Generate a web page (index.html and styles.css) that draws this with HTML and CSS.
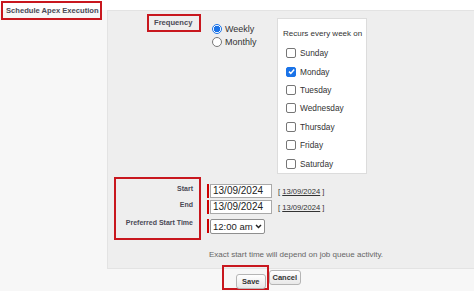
FILE: index.html
```html
<!DOCTYPE html>
<html lang="en">
<head>
<meta charset="UTF-8">
<title>Schedule Apex Execution</title>
<link rel="stylesheet" href="styles.css">
</head>
<body>
<div class="page">
    <div class="sidebar">
        <div class="title-box">Schedule Apex Execution</div>
    </div>
    <div class="main">
        <div class="panel">
            <div class="freq-row">
                <div class="label-col">
                    <div class="freq-box">Frequency</div>
                </div>
                <div class="radios">
                    <label class="radio-line"><span class="radio on"></span>Weekly</label>
                    <label class="radio-line"><span class="radio"></span>Monthly</label>
                </div>
                <div class="days">
                    <div class="days-title">Recurs every week on</div>
                    <div class="day"><span class="chk"></span>Sunday</div>
                    <div class="day"><span class="chk on"><svg width="9" height="9" viewBox="0 0 9 9"><path d="M2 4.6 L3.8 6.4 L7.2 2.6" fill="none" stroke="#fff" stroke-width="1.5"/></svg></span>Monday</div>
                    <div class="day"><span class="chk"></span>Tuesday</div>
                    <div class="day"><span class="chk"></span>Wednesday</div>
                    <div class="day"><span class="chk"></span>Thursday</div>
                    <div class="day"><span class="chk"></span>Friday</div>
                    <div class="day"><span class="chk"></span>Saturday</div>
                </div>
            </div>

            <div class="time-row">
                <div class="time-labels">
                    <div class="tl">Start</div>
                    <div class="tl">End</div>
                    <div class="tl">Preferred Start Time</div>
                </div>
                <div class="time-fields">
                    <div class="field">
                        <span class="req"></span><span class="input">13/09/2024</span>
                        <span class="today">[ <u>13/09/2024</u> ]</span>
                    </div>
                    <div class="field">
                        <span class="req"></span><span class="input">13/09/2024</span>
                        <span class="today">[ <u>13/09/2024</u> ]</span>
                    </div>
                    <div class="field">
                        <span class="req"></span><span class="select">12:00 am <svg width="7" height="5" viewBox="0 0 8 6"><path d="M1 1.2 L4 4.2 L7 1.2" fill="none" stroke="#222" stroke-width="1.8"/></svg></span>
                    </div>
                </div>
            </div>

            <div class="note">Exact start time will depend on job queue activity.</div>
        </div>
        <div class="buttons">
            <div class="save-box"><button class="btn">Save</button></div>
            <button class="btn cancel">Cancel</button>
        </div>
    </div>
</div>
</body>
</html>
```

FILE: styles.css
```css
body {
    margin: 0;
    background: #f8f8f8;
    font-family: "Liberation Sans", Arial, sans-serif;
    color: #222;
}

.page {
    display: flex;
    height: 291px;
    background: linear-gradient(#ffffff 0, #ffffff 10px, #f7f7f7 10px);
}

/* left title */
.sidebar {
    width: 107px;
    flex: none;
}
.title-box {
    margin: 1px 0 0 1px;
    width: 94px;
    height: 15px;
    border: 2px solid #c8171e;
    font-size: 7.6px;
    font-weight: bold;
    color: #4a4a56;
    padding-left: 3px;
    line-height: 15px;
    white-space: nowrap;
}

/* main panel */
.main {
    flex: 1;
}
.panel {
    margin-top: 10px;
    height: 257px;
    background: #eeeeee;
    border: 1px solid #e3e3e3;
    border-right: none;
}

.freq-row {
    display: flex;
    padding-top: 3px;
}
.label-col {
    width: 93px;
    display: flex;
    justify-content: flex-end;
}
.freq-box {
    width: 45px;
    height: 14px;
    border: 2px solid #c8171e;
    font-size: 7.6px;
    font-weight: bold;
    color: #4a4a56;
    line-height: 13px;
    padding-left: 5px;
}

.radios {
    width: 76px;
    padding: 8px 0 0 11px;
    box-sizing: border-box;
}
.radio-line {
    display: flex;
    align-items: center;
    font-size: 9px;
    color: #333;
    height: 13px;
}
.radio {
    width: 8px;
    height: 8px;
    border: 1px solid #777;
    border-radius: 50%;
    background: #fff;
    margin-right: 3px;
    box-sizing: content-box;
}
.radio.on {
    border-color: #1a73e8;
    background: radial-gradient(circle, #1a73e8 0, #1a73e8 3px, #fff 3.5px);
}

.days {
    margin-top: 4px;
    width: 90px;
    height: 156px;
    background: #fff;
    border: 1px solid #dcdcdc;
    padding: 10px 0 0 5px;
    box-sizing: border-box;
}
.days-title {
    font-size: 8px;
    color: #333;
    white-space: nowrap;
    margin-bottom: 6px;
}
.day {
    display: flex;
    align-items: center;
    font-size: 8.3px;
    color: #333;
    height: 18.4px;
    padding-left: 3px;
}
.chk {
    width: 8px;
    height: 8px;
    border: 1px solid #767676;
    border-radius: 2px;
    background: #fff;
    margin-right: 4px;
    display: inline-flex;
}
.chk.on {
    background: #1a73e8;
    border-color: #1a73e8;
}
.chk svg {
    margin: -0.5px;
}

/* start / end / time */
.time-row {
    display: flex;
    margin-top: 3px;
}
.time-labels {
    margin-left: 6px;
    width: 83px;
    height: 53px;
    border: 2px solid #c8171e;
    padding-top: 6px;
}
.tl {
    font-size: 7px;
    font-weight: bold;
    color: #4a4a56;
    text-align: right;
    padding-right: 6px;
    height: 16px;
}
.tl:last-child {
    padding-top: 2px;
}

.time-fields {
    padding: 6px 0 0 6px;
}
.field {
    display: flex;
    align-items: center;
    height: 16px;
}
.field:last-child {
    margin-top: 3px;
}
.req {
    width: 2px;
    height: 14px;
    background: #c00;
    margin-right: 1px;
}
.input {
    width: 58px;
    height: 12px;
    border: 1px solid #a9a9a9;
    background: #fff;
    font-size: 10px;
    line-height: 12px;
    padding-left: 2px;
    color: #222;
}
.today {
    margin-left: 6px;
    font-size: 7.6px;
    color: #333;
}
.select {
    display: flex;
    align-items: center;
    gap: 2px;
    height: 13px;
    padding: 0 2px 0 2px;
    border: 1px solid #8f8f8f;
    border-radius: 2px;
    background: #fff;
    font-size: 9.5px;
    white-space: nowrap;
    color: #222;
}

.note {
    margin-top: 10px;
    text-align: center;
    padding-left: 10px;
    font-size: 8px;
    color: #666;
}

/* buttons */
.buttons {
    display: flex;
    align-items: center;
    margin-left: 115px;
    margin-top: -4px;
}
.save-box {
    border: 2px solid #c8171e;
    padding: 3px 1px 1px 12px;
    height: 17px;
}
.btn {
    font-family: "Liberation Sans", Arial, sans-serif;
    font-size: 7.5px;
    font-weight: bold;
    color: #333;
    height: 15px;
    padding: 0 5px;
    border: 1px solid #b5b5b5;
    border-radius: 3px;
    background: linear-gradient(#ffffff, #e8e8e8);
}
.cancel {
    margin-left: 0;
    padding: 0 3px;
}
```
